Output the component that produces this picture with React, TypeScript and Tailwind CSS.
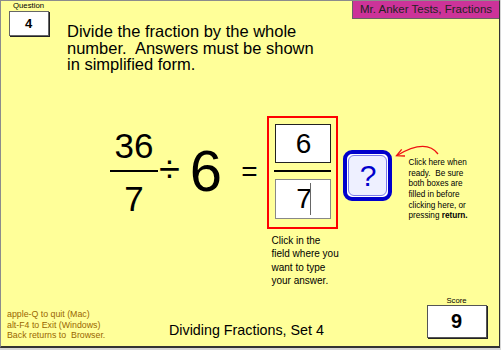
export default function App() {
  const hint = ["Click here when", "ready.  Be sure", "both boxes are", "filled in before", "clicking here, or"];
  return (
    <div className="w-[501px] h-[350px] bg-[#d6d6d6] font-['Liberation_Sans',Arial,sans-serif] text-black">
      <div className="w-[500px] h-[348px] bg-[#ffff99] border-l border-t border-[#8c8c8c] border-r border-b-2 border-r-[#333] border-b-[#333] flex flex-col">
        {/* Header */}
        <div className="flex h-[115px] shrink-0">
          <div className="ml-[7px] w-[41px] flex flex-col items-center">
            <div className="mt-[1px] text-[7.75px] leading-[7.75px] whitespace-nowrap">Question</div>
            <div className="mt-[1px] w-[40px] h-[25px] bg-white border border-[#666] shadow-[1px_1px_0_#222] flex items-center justify-center text-[13px] font-bold leading-none">
              4
            </div>
          </div>
          <div className="ml-[18px] mt-[22px] text-[16.5px] leading-[16.5px] whitespace-pre">
            {"Divide the fraction by the whole\nnumber.  Answers must be shown\nin simplified form."}
          </div>
          <div className="ml-auto w-[147px] h-[18px] bg-[#cc3399] border-l border-b border-[#666] flex items-center justify-center text-[11.5px] leading-none text-[#222] whitespace-nowrap">
            Mr. Anker Tests, Fractions
          </div>
        </div>

        {/* Equation row */}
        <div className="flex h-[180px] shrink-0 items-start">
          <div className="ml-[109px] w-[48px] flex flex-col items-center">
            <div className="mt-[12px] text-[35px] leading-[35px]">36</div>
            <div className="mt-[7px] w-[48px] h-[2px] bg-black" />
            <div className="mt-[9px] text-[35px] leading-[35px]">7</div>
          </div>
          <div className="ml-[1px] mt-[34px] text-[38px] leading-[38px]">÷</div>
          <div className="ml-[10px] mt-[26px] text-[58px] leading-[58px]">6</div>
          <div className="ml-[19px] mt-[42px] text-[28px] leading-[28px]">=</div>
          <div className="ml-[10px] w-[71px] flex flex-col">
            <div className="h-[113px] border-2 border-[#ff0000] flex flex-col">
              <div className="ml-[6px] mt-[6px] w-[56px] h-[39px] bg-white border border-[#222] flex items-center justify-center text-[28px] leading-none">
                6
              </div>
              <div className="ml-[5px] mt-[7px] w-[57px] h-[2px] bg-black" />
              <div className="ml-[6px] mt-[7px] w-[56px] h-[40px] bg-white border border-[#888] flex items-center justify-center">
                <span className="text-[28px] leading-none">7</span>
                <span className="ml-[-2px] w-[1px] h-[32px] bg-[#666]" />
              </div>
            </div>
            <div className="ml-[4px] mt-[5px] text-[10px] leading-[13.3px] whitespace-pre">
              {"Click in the\nfield where you\nwant to type\nyour answer."}
            </div>
          </div>
          <div className="ml-[5px] mt-[34px] w-[49px] h-[51px] rounded-[9px] border-[4px] border-[#0000cc] bg-white p-[1px] flex">
            <div className="flex-1 rounded-[6px] border border-[#7b7bea] bg-[#eef0ff] flex items-center justify-center text-[30px] leading-none text-[#0000cc]">
              ?
            </div>
          </div>
          <div className="ml-[3px] flex flex-col">
            <svg className="mt-[28px] block" width="46" height="15" viewBox="0 0 46 15">
              <path d="M43 10 Q 31 -6 1.5 11.7" fill="none" stroke="#ee1111" strokeWidth="1.3" />
              <path d="M6.7 5.3 L1.5 11.7 L10 12" fill="none" stroke="#ee1111" strokeWidth="1.3" />
            </svg>
            <div className="ml-[13px] mt-[-1px] flex flex-col text-[8.2px] leading-[10.7px]">
              {hint.map((l) => (
                <div key={l} className="whitespace-pre h-[10.7px]">{l}</div>
              ))}
              <div className="whitespace-pre h-[10.7px]">
                pressing <span className="font-bold">return.</span>
              </div>
            </div>
          </div>
        </div>

        {/* Bottom row */}
        <div className="flex flex-1 items-start">
          <div className="ml-[6px] mt-[13px] w-[162px] text-[8.8px] leading-[10.7px] text-[#996600] whitespace-pre">
            {"apple-Q to quit (Mac)\nalt-F4 to Exit (Windows)\nBack returns to  Browser."}
          </div>
          <div className="mt-[27px] text-[14.3px] leading-[14.3px] whitespace-nowrap">
            Dividing Fractions, Set 4
          </div>
          <div className="ml-auto mr-[12px] w-[61px] flex flex-col items-center">
            <div className="mt-[1px] text-[7.7px] leading-[7.7px]">Score</div>
            <div className="mt-[0px] w-[60px] h-[33px] bg-white border border-[#555] shadow-[1px_1px_0_#222] flex items-center justify-center text-[20px] font-bold leading-none">
              9
            </div>
          </div>
        </div>
      </div>
    </div>
  );
}
